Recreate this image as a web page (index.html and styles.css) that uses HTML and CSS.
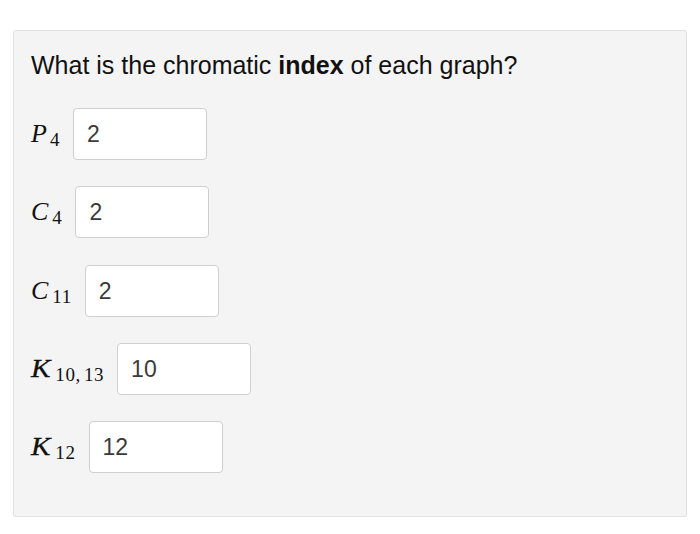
FILE: index.html
```html
<!DOCTYPE html>
<html>
<head>
<meta charset="utf-8">
<link rel="stylesheet" href="styles.css">
</head>
<body>
<div class="panel">
  <p class="question">What is the chromatic <b>index</b> of each graph?</p>
  <div class="row">
    <span class="math"><i class="var-p">P</i><sub>4</sub></span>
    <div class="field">2</div>
  </div>
  <div class="row">
    <span class="math"><i class="var-c">C</i><sub>4</sub></span>
    <div class="field">2</div>
  </div>
  <div class="row">
    <span class="math"><i class="var-c">C</i><sub>11</sub></span>
    <div class="field">2</div>
  </div>
  <div class="row">
    <span class="math"><i class="var-k">K</i><sub>10,<span class="thin"></span>13</sub></span>
    <div class="field">10</div>
  </div>
  <div class="row">
    <span class="math"><i class="var-k">K</i><sub>12</sub></span>
    <div class="field">12</div>
  </div>
</div>
</body>
</html>
```
FILE: styles.css
```css
html, body {
  margin: 0;
  padding: 0;
  background: #ffffff;
}
body {
  padding: 30px 13px 0 13px;
  font-family: "Liberation Sans", Arial, sans-serif;
}
.panel {
  box-sizing: border-box;
  width: 674px;
  height: 487px;
  background: #f4f4f4;
  border: 1px solid #e2e2e2;
  border-radius: 3px;
  padding: 18px 17px 0 17px;
  box-shadow: 0 1px 1px rgba(0,0,0,0.04);
}
.question {
  margin: 0 0 27px 0;
  font-size: 25px;
  line-height: 32px;
  color: #111;
}
.question b {
  font-weight: bold;
}
.row {
  display: flex;
  align-items: center;
  gap: 13px;
  height: 52px;
  margin-bottom: 26.3px;
}
.math {
  font-family: "Liberation Serif", "Times New Roman", serif;
  font-size: 26px;
  color: #111;
  white-space: nowrap;
  position: relative;
  top: 1px;
}
.math i {
  font-style: italic;
  letter-spacing: 1px;
}
.math .var-p {
  margin-right: 1px;
}
.math .var-c {
  margin-right: 2px;
}
.math .var-k {
  display: inline-block;
  transform: scaleX(1.12);
  transform-origin: left center;
  margin-right: 5px;
  -webkit-text-stroke: 0.3px #111;
}
.math sub {
  font-size: 19px;
  vertical-align: -4px;
  font-style: normal;
  margin-left: 1px;
  letter-spacing: 0.6px;
}
.thin {
  display: inline-block;
  width: 3px;
}
.field {
  box-sizing: border-box;
  width: 134px;
  height: 52px;
  background: #ffffff;
  border: 1px solid #cfcfcf;
  border-radius: 4px;
  padding-left: 13px;
  font-size: 23px;
  line-height: 50px;
  color: #3a3a3a;
}
```
